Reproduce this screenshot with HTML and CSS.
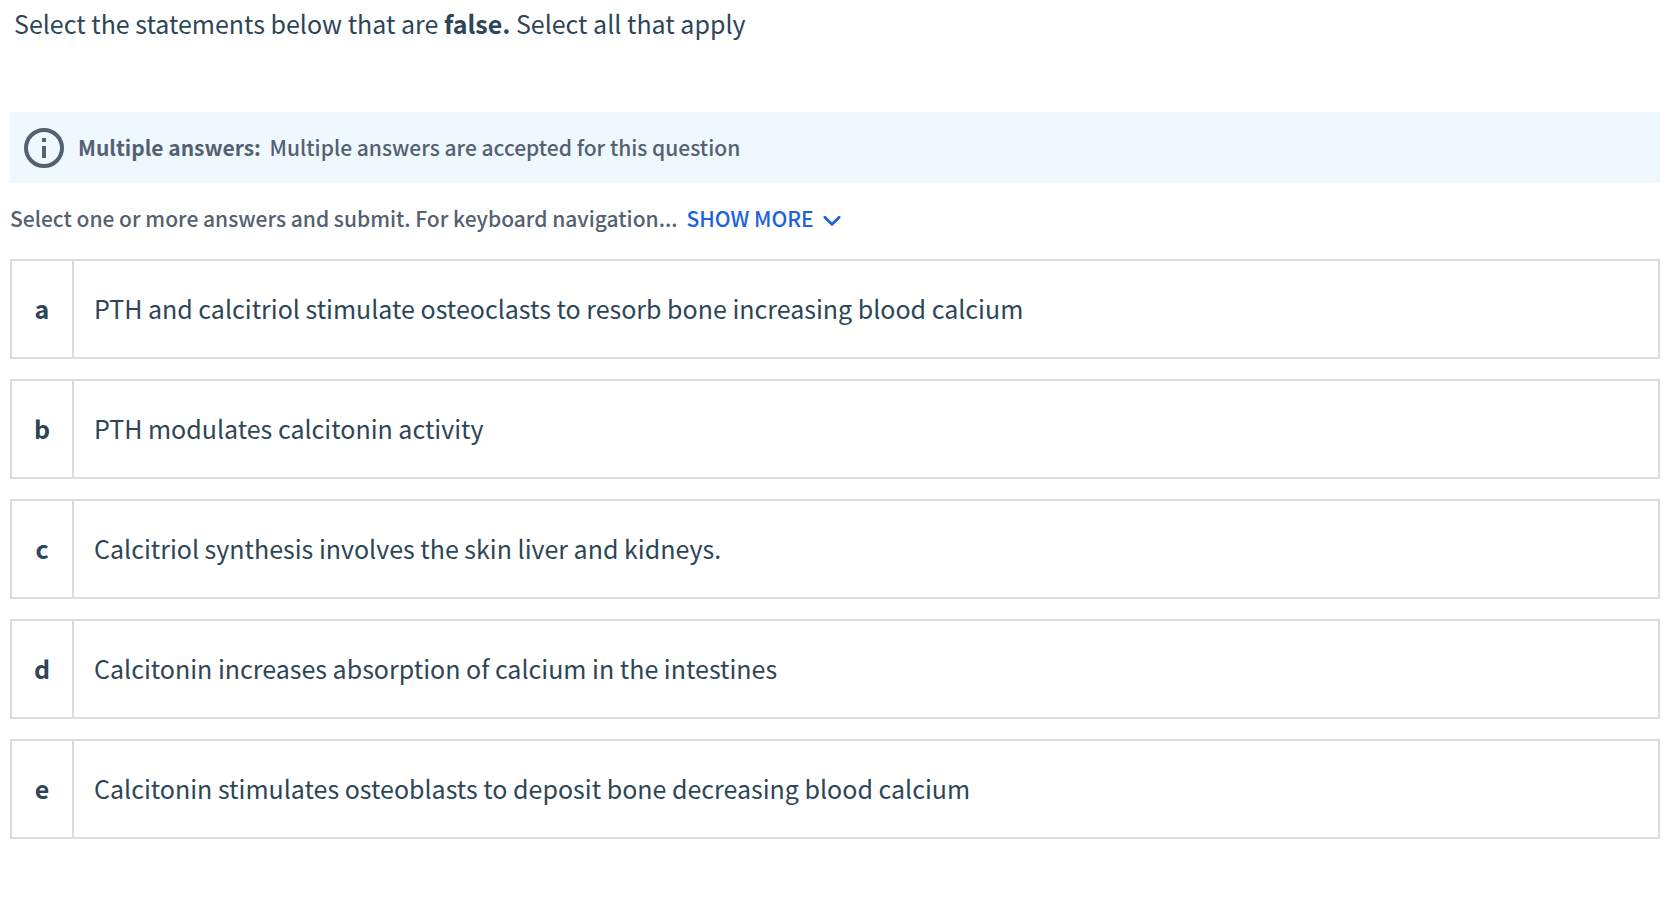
FILE: index.html
```html
<!DOCTYPE html>
<html lang="en">
  <head>
    <meta charset="utf-8">
    <meta name="viewport" content="width=device-width, initial-scale=1">
    <title>Multiple answers question</title>
    <link rel="stylesheet" href="styles.css">
  </head>
  <body>
    <main class="question">
      <p class="prompt">Select the statements below that are <strong>false.</strong> Select all that apply</p>

      <div class="notice">
        <svg class="notice-icon" viewBox="0 0 40 40" aria-hidden="true">
          <circle cx="20" cy="20" r="18" fill="none" stroke="currentColor" stroke-width="4" />
          <path d="M18 10h4v4h-4zM18 18h4v12h-4z" fill="currentColor" />
        </svg>
        <p class="notice-text"><strong>Multiple answers:</strong> Multiple answers are accepted for this question</p>
      </div>

      <div class="instructions">
        <span>Select one or more answers and submit. For keyboard navigation...</span>
        <button type="button" class="show-more">
          SHOW MORE
          <svg class="chevron" viewBox="0 0 18 18" aria-hidden="true">
            <path d="M1.8 8.2L9 15.3l7.2-7.1" fill="none" stroke="currentColor" stroke-width="2.7" stroke-linecap="round" />
          </svg>
        </button>
      </div>

      <div class="answers">
        <button type="button" class="answer">
          <span class="answer-key">a</span>
          <span class="answer-text">PTH and calcitriol stimulate osteoclasts to resorb bone increasing blood calcium</span>
        </button>
        <button type="button" class="answer">
          <span class="answer-key">b</span>
          <span class="answer-text">PTH modulates calcitonin activity</span>
        </button>
        <button type="button" class="answer">
          <span class="answer-key">c</span>
          <span class="answer-text">Calcitriol synthesis involves the skin liver and kidneys.</span>
        </button>
        <button type="button" class="answer">
          <span class="answer-key">d</span>
          <span class="answer-text">Calcitonin increases absorption of calcium in the intestines</span>
        </button>
        <button type="button" class="answer">
          <span class="answer-key">e</span>
          <span class="answer-text">Calcitonin stimulates osteoblasts to deposit bone decreasing blood calcium</span>
        </button>
      </div>
    </main>
  </body>
</html>
```

FILE: styles.css
```css
*,
*::before,
*::after {
  box-sizing: border-box;
}
body {
  margin: 0;
  background: #fff;
  color: #2d4657;
  font-family: "Noto Sans CJK SC", "Open Sans", sans-serif;
}
p {
  margin: 0;
}
button {
  margin: 0;
  padding: 0;
  border: none;
  background: transparent;
  color: inherit;
  font: inherit;
  text-align: left;
  cursor: pointer;
}
.question {
  padding: 5px 10px;
}
.prompt {
  padding: 0 4px;
  margin-bottom: 71px;
  font-size: 25px;
  line-height: 36px;
}

/* Notice bar */
.notice {
  display: flex;
  align-items: center;
  gap: 14px;
  min-height: 71px;
  padding: 0 14px;
  background: #eff7ff;
  color: #536170;
}
.notice-icon {
  flex: none;
  width: 40px;
  height: 40px;
}
.notice-text {
  padding-bottom: 2px;
  font-size: 21px;
  font-weight: 500;
  line-height: 32px;
}
.notice-text strong {
  margin-right: 4px;
}

/* Instructions */
.instructions {
  display: flex;
  align-items: center;
  gap: 9px;
  margin: 19px 0 25px;
  color: #536170;
  font-size: 21px;
  font-weight: 500;
  line-height: 32px;
}
.show-more {
  display: flex;
  align-items: center;
  gap: 9px;
  color: #1d63dc;
}
.chevron {
  width: 18px;
  height: 18px;
}

/* Answers */
.answers {
  display: flex;
  flex-direction: column;
  gap: 20px;
}
.answer {
  display: flex;
  min-height: 100px;
  border: 2px solid #d8dce1;
  font-size: 25px;
  line-height: 36px;
}
.answer-key {
  display: flex;
  flex: none;
  align-items: center;
  justify-content: center;
  width: 62px;
  padding-bottom: 2px;
  border-right: 2px solid #d8dce1;
  font-weight: 700;
}
.answer-text {
  align-self: center;
  padding: 0 20px 2px;
}
```
